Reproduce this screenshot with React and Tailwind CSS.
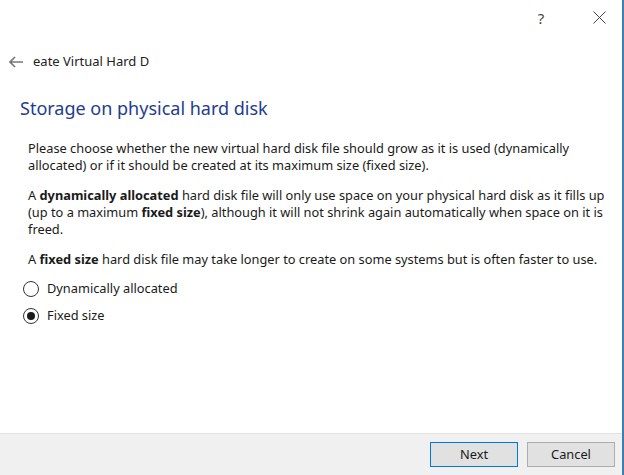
import { useState } from "react";

export default function App() {
  const [choice, setChoice] = useState("fixed");

  return (
    <div
      className="w-[624px] h-[475px] bg-white flex flex-col border-r-2 border-[#3c7fb1] text-[#1a1a1a] overflow-hidden"
      style={{ fontFamily: '"Noto Sans", "Open Sans", sans-serif' }}
    >
      {/* Title bar */}
      <div className="h-[36px] flex items-center justify-end pr-[16px] shrink-0">
        <span className="text-[15px] text-[#444] w-[12px] text-center mr-[46px]">?</span>
        <svg width="13" height="13" viewBox="0 0 13 13" className="mb-[1px]">
          <path d="M0.5 0.5 L12.5 12.5 M12.5 0.5 L0.5 12.5" stroke="#444" strokeWidth="1" fill="none" />
        </svg>
      </div>

      {/* Back row */}
      <div className="h-[52px] flex items-center pl-[9px] shrink-0">
        <svg width="15" height="12" viewBox="0 0 15 12" className="mr-[9px]">
          <path d="M1 6 H14 M6 1 L1 6 L6 11" stroke="#777" strokeWidth="1.6" fill="none" />
        </svg>
        <span className="text-[13px] text-[#222]">eate Virtual Hard D</span>
      </div>

      {/* Header */}
      <div className="pl-[20px] h-[40px] flex items-center shrink-0">
        <h1 className="text-[18px] text-[#1e3d8f]">Storage on physical hard disk</h1>
      </div>

      {/* Body */}
      <div className="pl-[28px] pr-[12px] pt-[12px] text-[12.8px] leading-[17px] flex flex-col gap-[13px] whitespace-nowrap">
        <p>
          Please choose whether the new virtual hard disk file should grow as it is used (dynamically
          <br />
          allocated) or if it should be created at its maximum size (fixed size).
        </p>
        <p>
          A <b>dynamically allocated</b> hard disk file will only use space on your physical hard disk as it fills up
          <br />
          (up to a maximum <b>fixed size</b>), although it will not shrink again automatically when space on it is
          <br />
          freed.
        </p>
        <p>
          A <b>fixed size</b> hard disk file may take longer to create on some systems but is often faster to use.
        </p>
      </div>

      {/* Radios */}
      <div className="pl-[23px] pt-[12px] flex flex-col gap-[9px] text-[12.8px]">
        {[
          ["dynamic", "Dynamically allocated"],
          ["fixed", "Fixed size"],
        ].map(([key, label]) => (
          <label key={key} className="flex items-center h-[18px] cursor-pointer" onClick={() => setChoice(key)}>
            <span className="w-[16px] h-[16px] rounded-full border border-[#333] flex items-center justify-center mr-[8px]">
              {choice === key && <span className="w-[8px] h-[8px] rounded-full bg-[#1a1a1a]" />}
            </span>
            {label}
          </label>
        ))}
      </div>

      <div className="flex-1" />

      {/* Footer */}
      <div className="h-[42px] shrink-0 bg-[#f0f0f0] border-t border-[#e3e3e3] flex items-center justify-end pr-[7px] gap-[9px] text-[12.8px]">
        <button className="w-[88px] h-[25px] bg-[#e1e1e1] border border-[#0078d7] text-[#1a1a1a]">Next</button>
        <button className="w-[88px] h-[25px] bg-[#e1e1e1] border border-[#adadad] text-[#1a1a1a]">Cancel</button>
      </div>
    </div>
  );
}
